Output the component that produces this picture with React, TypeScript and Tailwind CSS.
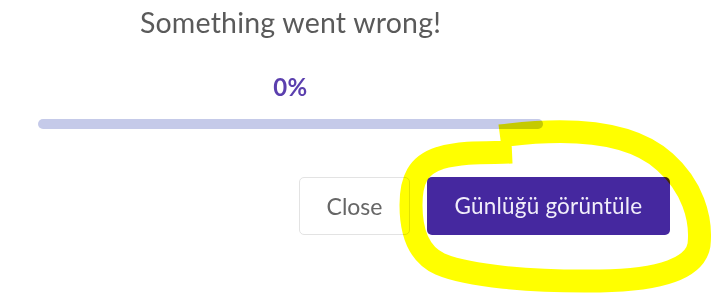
import React from 'react';

const App: React.FC = () => {
  return (
    <div className="relative w-[714px] h-[301px] bg-white overflow-hidden" style={{ fontFamily: 'Lato, "Open Sans", sans-serif' }}>
      <div className="w-[505px] ml-[38px] pt-[4px] flex flex-col items-center">
        <h2 className="text-[28.5px] leading-[36px] text-[#5a5a5a] tracking-[0.2px]">Something went wrong!</h2>
        <div className="mt-[32px] text-[24px] leading-[30px] font-bold text-[#5b3fae] tracking-[0.5px]">0%</div>
        <div className="mt-[17px] w-full h-[10px] rounded-full bg-[#c5cae9]" />
      </div>

      <div className="mt-[48px] pr-[44px] flex justify-end gap-[17px]">
        <button className="h-[58px] w-[111px] rounded-[5px] border border-[#e3e3e3] bg-white text-[23px] text-[#666666]">
          Close
        </button>
        <button className="h-[58px] w-[243px] rounded-[5px] bg-[#45289f] text-[22.5px] text-[#f1eefa] tracking-[0.2px]">
          Günlüğü görüntüle
        </button>
      </div>

      {/* hand-drawn highlight */}
      <svg className="absolute inset-0 pointer-events-none mix-blend-multiply" width="714" height="301" viewBox="0 0 714 301">
        <path
          d="M 500 136 C 560 128, 628 128, 665 162 C 692 186, 702 218, 699 245 C 695 268, 662 280, 600 281 C 530 282, 468 276, 440 264 C 418 254, 411 232, 411 205 C 411 180, 418 165, 440 158 C 465 151, 490 153, 512 152"
          fill="none"
          stroke="#ffff00"
          strokeWidth="23"
          strokeLinecap="butt"
          strokeLinejoin="round"
        />
      </svg>
    </div>
  );
};

export default App;
